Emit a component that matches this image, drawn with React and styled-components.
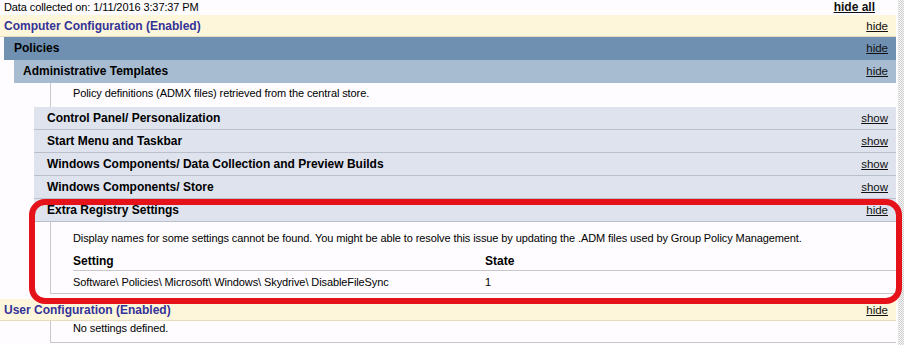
import React from "react";
import styled, { createGlobalStyle } from "styled-components";

const GlobalStyle = createGlobalStyle`
  html, body {
    margin: 0;
    padding: 0;
    background: #fff;
  }
`;

const Page = styled.div`
  position: relative;
  display: flex;
  width: 904px;
  height: 345px;
  overflow: hidden;
  background: #fefcfe;
  font-family: "Liberation Sans", Arial, sans-serif;
  font-size: 11px;
  letter-spacing: -0.1px;
  color: #000;
`;

const Main = styled.div`
  flex: 1;
  min-width: 0;
`;

const Scrollbar = styled.div`
  width: 5px;
  border-left: 1px solid #e6e6e6;
  background: repeating-conic-gradient(#cfcfcf 0 25%, #f6f6f6 0 50%) 0 0 / 2px 2px;
`;

const TopBar = styled.div`
  display: flex;
  justify-content: space-between;
  align-items: center;
  height: 15px;
  padding: 0 23px 0 4px;
  line-height: 15px;
`;

const Link = styled.span`
  font-size: ${(p) => (p.$bold ? "12px" : "11.5px")};
  font-weight: ${(p) => (p.$bold ? "bold" : "normal")};
  letter-spacing: 0;
  text-decoration: underline;
  color: #111;
  cursor: pointer;
`;

const bgFor = {
  config: "#fef6da",
  policies: "#7090b2",
  templates: "#a7bbd1",
  category: "#dee3ee",
};

const Bar = styled.div`
  display: flex;
  justify-content: space-between;
  align-items: center;
  box-sizing: border-box;
  height: ${(p) => (p.$kind === "config" ? "22px" : "23px")};
  margin-left: ${(p) => p.$indent}px;
  margin-right: 2px;
  margin-top: ${(p) => p.$top || 0}px;
  padding: 0 8px 0 ${(p) => p.$pad}px;
  background: ${(p) => bgFor[p.$kind]};
  border-bottom: 1px solid
    ${(p) => (p.$kind === "config" ? "#e6dcc0" : p.$kind === "category" ? "#b9c0cc" : "transparent")};
  font-size: 12px;
  letter-spacing: 0;
  font-weight: bold;
  color: ${(p) => (p.$kind === "config" ? "#333399" : "#000")};
`;

const Content = styled.div`
  margin-left: 50px;
  margin-right: 2px;
  border-left: 1px solid #c8c8c8;
  border-bottom: ${(p) => (p.$closed ? "1px solid #c8c8c8" : "none")};
  padding: ${(p) => p.$pad};
  line-height: 15px;
`;

const Note = styled.div`
  padding-left: 22px;
`;

const Table = styled.div`
  margin: 7px 0 0 22px;
`;

const TableRow = styled.div`
  display: grid;
  grid-template-columns: 412px 1fr;
  align-items: center;
  height: ${(p) => (p.$head ? "17px" : "22px")};
  border-bottom: ${(p) => (p.$head ? "1px solid #c8c8c8" : "none")};
  font-size: ${(p) => (p.$head ? "12px" : "11px")};
  letter-spacing: ${(p) => (p.$head ? "0" : "-0.1px")};
  font-weight: ${(p) => (p.$head ? "bold" : "normal")};
`;

const Highlight = styled.div`
  position: absolute;
  left: 29px;
  top: 199px;
  width: 873px;
  height: 105px;
  box-sizing: border-box;
  border: 6px solid #e5121a;
  border-radius: 16px;
  pointer-events: none;
`;

const categories = [
  { name: "Control Panel/ Personalization", action: "show" },
  { name: "Start Menu and Taskbar", action: "show" },
  { name: "Windows Components/ Data Collection and Preview Builds", action: "show" },
  { name: "Windows Components/ Store", action: "show" },
];

export default function App() {
  return (
    <>
      <GlobalStyle />
      <Page>
        <Main>
          <TopBar>
            <span>Data collected on: 1/11/2016 3:37:37 PM</span>
            <Link $bold>hide all</Link>
          </TopBar>

          <Bar $kind="config" $indent={0} $pad={4}>
            <span>Computer Configuration (Enabled)</span>
            <Link>hide</Link>
          </Bar>
          <Bar $kind="policies" $indent={4} $pad={10}>
            <span>Policies</span>
            <Link>hide</Link>
          </Bar>
          <Bar $kind="templates" $indent={14} $pad={9}>
            <span>Administrative Templates</span>
            <Link>hide</Link>
          </Bar>
          <Content $pad="3px 0 6px">
            <Note>Policy definitions (ADMX files) retrieved from the central store.</Note>
          </Content>

          {categories.map((c) => (
            <Bar key={c.name} $kind="category" $indent={34} $pad={13}>
              <span>{c.name}</span>
              <Link>{c.action}</Link>
            </Bar>
          ))}
          <Bar $kind="category" $indent={34} $pad={13}>
            <span>Extra Registry Settings</span>
            <Link>hide</Link>
          </Bar>
          <Content $pad="9px 0 0" $closed>
            <Note>
              Display names for some settings cannot be found. You might be able to resolve this issue by
              updating the .ADM files used by Group Policy Management.
            </Note>
            <Table>
              <TableRow $head>
                <span>Setting</span>
                <span>State</span>
              </TableRow>
              <TableRow>
                <span>Software\ Policies\ Microsoft\ Windows\ Skydrive\ DisableFileSync</span>
                <span>1</span>
              </TableRow>
            </Table>
          </Content>

          <Bar $kind="config" $indent={0} $pad={4} $top={5}>
            <span>User Configuration (Enabled)</span>
            <Link>hide</Link>
          </Bar>
          <Content $pad="0 0 6px" $closed>
            <Note>No settings defined.</Note>
          </Content>
        </Main>
        <Scrollbar />
        <Highlight />
      </Page>
    </>
  );
}
